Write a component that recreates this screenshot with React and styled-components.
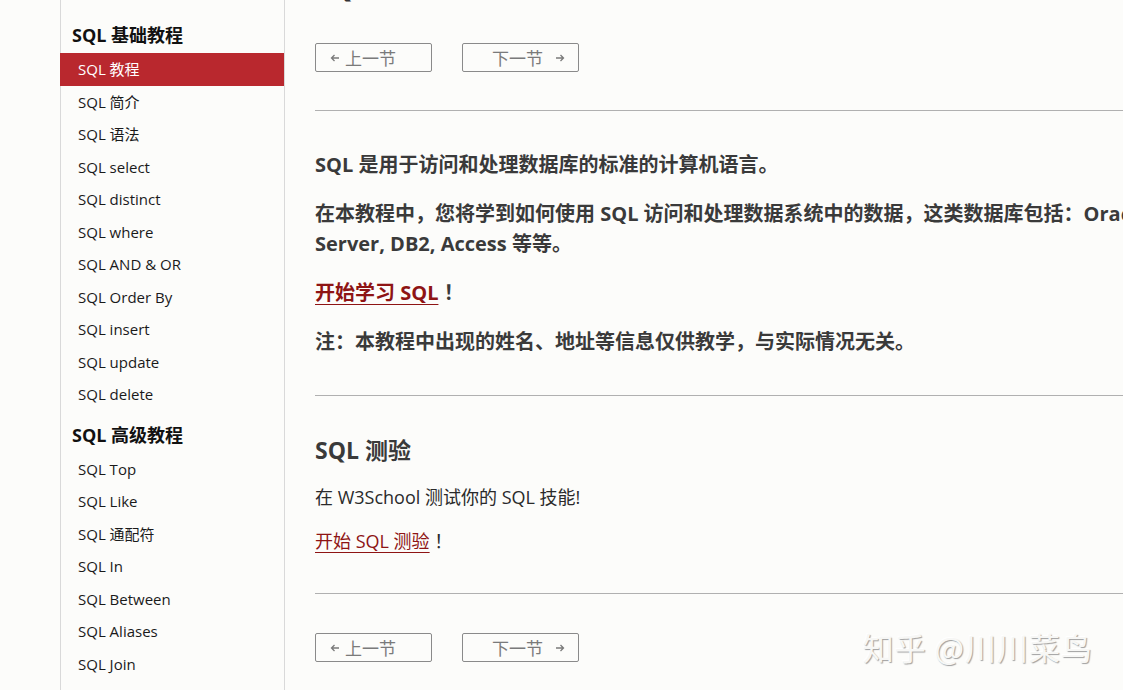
import React from "react";
import styled, { createGlobalStyle } from "styled-components";

const GlobalStyle = createGlobalStyle`
  html, body {
    margin: 0;
    padding: 0;
    background: #fcfcfa;
    overflow: hidden;
    height: 100%;
  }
  body {
    font-family: "Open Sans", "Noto Sans CJK SC", sans-serif;
    color: #333;
  }
`;

const basics = [
  "SQL 教程",
  "SQL 简介",
  "SQL 语法",
  "SQL select",
  "SQL distinct",
  "SQL where",
  "SQL AND & OR",
  "SQL Order By",
  "SQL insert",
  "SQL update",
  "SQL delete",
];

const advanced = [
  "SQL Top",
  "SQL Like",
  "SQL 通配符",
  "SQL In",
  "SQL Between",
  "SQL Aliases",
  "SQL Join",
];

const Page = styled.div`
  display: flex;
  height: 690px;
  padding-left: 60px;
`;

const Sidebar = styled.nav`
  flex: 0 0 225px;
  box-sizing: border-box;
  border-left: 1px solid #d9d9d9;
  border-right: 1px solid #d9d9d9;
  padding-top: 11px;
`;

const MenuTitle = styled.h2`
  margin: 0;
  padding: 6px 0 0 11px;
  font-size: 18px;
  line-height: 36px;
  font-weight: 700;
  color: #111;
`;

const MenuItem = styled.a`
  display: block;
  margin-left: -1px;
  padding-left: 18px;
  font-size: 15px;
  line-height: 32.5px;
  color: ${(p) => (p.$active ? "#fff" : "#1a1a1a")};
  background: ${(p) => (p.$active ? "#b9282e" : "transparent")};
  text-decoration: none;
`;

const Main = styled.main`
  flex: 1;
  min-width: 0;
  padding-left: 30px;
`;

const Title = styled.h1`
  margin: -34px 0 0;
  font-size: 28px;
  line-height: 40px;
  font-weight: 700;
  color: #333;
`;

const NavRow = styled.div`
  display: flex;
  gap: 30px;
  margin-top: ${(p) => p.$top || 0}px;
`;

const NavButton = styled.button`
  width: 117px;
  height: 29px;
  box-sizing: border-box;
  border: 1px solid #8a8a8a;
  border-radius: 2px;
  background: transparent;
  display: flex;
  align-items: center;
  gap: ${(p) => (p.$next ? 12 : 5)}px;
  justify-content: ${(p) => (p.$next ? "flex-end" : "flex-start")};
  padding: 0 13px 0 14px;
  font-family: "Open Sans", "Noto Sans CJK SC", sans-serif;
  font-size: 17px;
  color: #7a7a7a;
`;

const Divider = styled.hr`
  margin: 38px 0 39px;
  border: 0;
  border-top: 1px solid #b0b0b0;
  height: 0;
`;

const Lead = styled.p`
  margin: 0 0 19px;
  font-size: 20px;
  line-height: 30px;
  font-weight: 700;
  color: #3a3a3a;
  white-space: nowrap;
`;

const Heading = styled.h2`
  margin: 0 0 18px;
  font-size: 23px;
  line-height: 30px;
  font-weight: 700;
  color: #3a3a3a;
`;

const Text = styled.p`
  margin: 0 0 16px;
  font-size: 18px;
  line-height: 28px;
  color: #2a2a2a;
`;

const Link = styled.a`
  color: #8e1414;
  text-decoration: underline;
  text-underline-offset: 4px;
  text-decoration-thickness: 1px;
`;

const Watermark = styled.div`
  position: absolute;
  right: 30px;
  top: 624px;
  font-family: "Noto Sans CJK SC", sans-serif;
  font-size: 31px;
  letter-spacing: 1px;
  color: #f7f7f5;
  text-shadow: 1px 1px 1px #a0a0a0, -1px -1px 0 #ffffff;
  pointer-events: none;
`;

const Arrow = ({ dir }) => (
  <svg width="10" height="10" viewBox="0 0 10 10" fill="none" stroke="#7a7a7a" strokeWidth="1.3">
    {dir === "left" ? (
      <path d="M9 5H1.5M4.5 2L1.5 5l3 3" />
    ) : (
      <path d="M1 5h7.5M5.5 2l3 3-3 3" />
    )}
  </svg>
);

const Pager = ({ top }) => (
  <NavRow $top={top}>
    <NavButton>
      <Arrow dir="left" />
      上一节
    </NavButton>
    <NavButton $next>
      下一节
      <Arrow dir="right" />
    </NavButton>
  </NavRow>
);

export default function App() {
  return (
    <>
      <GlobalStyle />
      <Page>
        <Sidebar>
          <MenuTitle>SQL 基础教程</MenuTitle>
          {basics.map((t, i) => (
            <MenuItem key={t} $active={i === 0}>
              {t}
            </MenuItem>
          ))}
          <MenuTitle>SQL 高级教程</MenuTitle>
          {advanced.map((t) => (
            <MenuItem key={t}>{t}</MenuItem>
          ))}
        </Sidebar>
        <Main>
          <Title>SQL 教程</Title>
          <Pager top={37} />
          <Divider />
          <Lead>SQL 是用于访问和处理数据库的标准的计算机语言。</Lead>
          <Lead>
            在本教程中，您将学到如何使用 SQL 访问和处理数据系统中的数据，这类数据库包括：Oracle, Sybase, SQL
            <br />
            Server, DB2, Access 等等。
          </Lead>
          <Lead>
            <Link>开始学习 SQL</Link> ！
          </Lead>
          <Lead>注：本教程中出现的姓名、地址等信息仅供教学，与实际情况无关。</Lead>
          <Divider />
          <Heading>SQL 测验</Heading>
          <Text>在 W3School 测试你的 SQL 技能!</Text>
          <Text>
            <Link>开始 SQL 测验</Link> ！
          </Text>
          <Divider />
          <Pager />
        </Main>
      </Page>
      <Watermark>知乎 @川川菜鸟</Watermark>
    </>
  );
}
